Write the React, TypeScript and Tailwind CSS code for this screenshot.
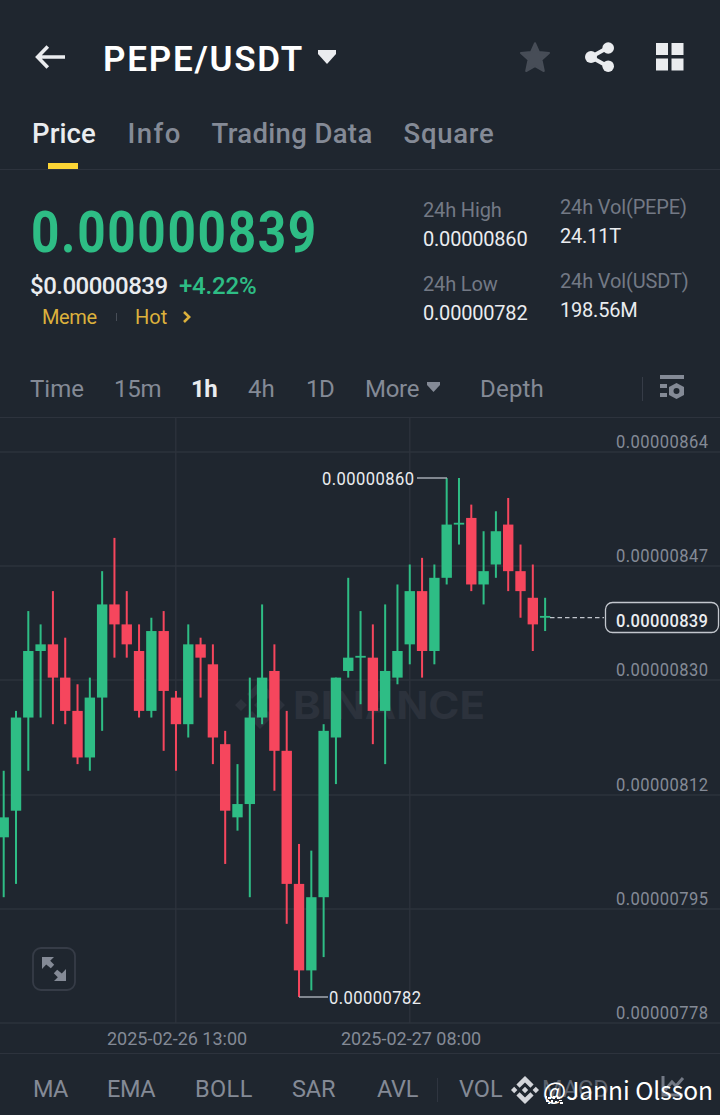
import clsx from "clsx";

type Candle = [number, number, number, number, "u" | "d"];

// high, body top, body bottom, low, in ticks below 0.00000860
const candles: Candle[] = [
  [44, 51, 54, 63, "u"], [35, 36, 50, 61, "u"], [20, 26, 36, 44, "u"], [22, 25, 26, 36, "u"],
  [17, 25, 30, 37, "d"], [24, 30, 35, 37, "d"], [31, 35, 42, 43, "d"], [30, 33, 42, 44, "u"],
  [14, 19, 33, 38, "u"], [9, 19, 22, 27, "d"], [17, 22, 25, 27, "d"], [22, 26, 35, 36, "d"],
  [21, 23, 35, 36, "u"], [20, 23, 32, 41, "d"], [32, 33, 37, 44, "d"], [22, 25, 37, 39, "u"],
  [24, 25, 27, 33, "d"], [25, 28, 39, 43, "d"], [38, 40, 50, 58, "d"], [43, 49, 51, 53, "u"],
  [30, 36, 49, 63, "u"], [19, 30, 36, 37, "u"], [25, 29, 41, 47, "d"], [35, 41, 61, 67, "d"],
  [55, 61, 74, 78, "d"], [56, 63, 74, 77, "u"], [37, 38, 63, 72, "u"], [30, 30, 39, 46, "u"],
  [15, 27, 29, 30, "u"], [20, 27, 27, 34, "u"], [22, 27, 35, 40, "d"], [19, 29, 35, 43, "u"],
  [16, 26, 30, 31, "u"], [13, 17, 25, 28, "u"], [12, 17, 26, 30, "d"], [13, 15, 26, 28, "u"],
  [0, 7, 15, 16, "u"], [0, 7, 7, 10, "u"], [4, 6, 16, 17, "d"], [8, 14, 16, 19, "u"],
  [5, 8, 13, 15, "u"], [3, 7, 14, 17, "d"], [10, 14, 17, 21, "d"], [13, 18, 22, 26, "d"],
  [18, 21, 21, 23, "u"],
];

const xAt = (i: number) => 3.7 + i * 12.305;
const yAt = (tick: number) => 60 + tick * 6.654;

const priceLevels = [
  { y: 34, label: "0.00000864" },
  { y: 148, label: "0.00000847" },
  { y: 262, label: "0.00000830" },
  { y: 377, label: "0.00000812" },
  { y: 491, label: "0.00000795" },
  { y: 605, label: "0.00000778" },
];

const tabs = [
  { label: "Price", className: "w-[95.5px] text-[#eaecef] tracking-[0.1px]", active: true },
  { label: "Info", className: "w-[84px] tracking-[1.5px]" },
  { label: "Trading Data", className: "w-[192px] tracking-[0.35px]" },
  { label: "Square", className: "tracking-[0.75px]" },
];

const intervals = [
  { label: "Time", className: "w-[84px]" },
  { label: "15m", className: "w-[77px] tracking-[-0.3px]" },
  { label: "1h", className: "w-[57px] font-bold tracking-[-0.5px] text-[#eaecef]" },
  { label: "4h", className: "w-[58px]" },
  { label: "1D", className: "w-[59px] tracking-[-0.4px]" },
];

const indicators = [
  { label: "MA", className: "w-[74px] tracking-[-0.8px]" },
  { label: "EMA", className: "w-[88px] tracking-[-0.4px]" },
  { label: "BOLL", className: "w-[97px] tracking-[0.4px]" },
  { label: "SAR", className: "w-[85px] tracking-[-0.2px]" },
  { label: "AVL", className: "w-[60px] tracking-[-0.3px]" },
];

const BinanceMark = ({ className }: { className?: string }) => (
  <svg viewBox="0 0 28 28" className={className} fill="currentColor">
    <path d="M14 0 22.6 8.6 19.4 11.8 14 6.4 8.6 11.8 5.4 8.6Z" />
    <path d="M14 28 22.6 19.4 19.4 16.2 14 21.6 8.6 16.2 5.4 19.4Z" />
    <path d="M3.2 10.8 6.4 14 3.2 17.2 0 14Z" />
    <path d="M24.8 10.8 28 14 24.8 17.2 21.6 14Z" />
    <path d="M14 10.8 17.2 14 14 17.2 10.8 14Z" />
  </svg>
);

const Header = () => (
  <header className="flex h-[115px] shrink-0 items-center pb-0.5 pl-[35px] pr-[36px]">
    <svg viewBox="0 0 30 24" className="h-6 w-[30px]" fill="none" stroke="#eaecef" strokeWidth="3.6">
      <path d="M2.5 12H30M12.8 1.5 2.6 12 12.8 22.5" />
    </svg>
    <h1 className="ml-[38px] w-[199px] whitespace-nowrap pt-[5px] text-[35px] font-semibold leading-none tracking-[1.75px] text-white">
      PEPE/USDT
    </h1>
    <svg viewBox="0 0 18 14" className="ml-4 h-[14px] w-[18px]" fill="#eaecef">
      <path d="M0 0H18V4L9 14 0 4Z" />
    </svg>
    <svg viewBox="0 0 30 30" className="ml-auto h-[30px] w-[30px]" fill="#474d57" stroke="#474d57" strokeWidth="2" strokeLinejoin="round">
      <path d="M15 1.2 18.9 10 29 11 21.5 17.8 23.8 29 15 24.2 6.2 29 8.5 17.8 1 11 11.1 10Z" />
    </svg>
    <svg viewBox="0 0 30 30" className="ml-[35px] h-[30px] w-[30px]" fill="#eaecef">
      <path d="M6 15 23 5.5M6 15 23 24.5" stroke="#eaecef" strokeWidth="4" />
      <circle cx="6" cy="15" r="6" />
      <circle cx="23.2" cy="6" r="5.8" />
      <circle cx="23.2" cy="24.2" r="5.8" />
    </svg>
    <svg viewBox="0 0 28 28" className="ml-[41px] h-7 w-7" fill="#eaecef">
      <path d="M0 0H12V12H0ZM15.5 0H27.5V12H15.5ZM0 15.5H12V27.5H0ZM15.5 15.5H27.5V27.5H15.5Z" />
    </svg>
  </header>
);

const Stat = ({ label, value }: { label: string; value: string }) => (
  <div className="h-[74px] whitespace-nowrap">
    <div className="text-[20px] leading-7 tracking-[-0.15px] text-[#737985]">{label}</div>
    <div className="text-[20px] leading-[30px] tracking-[-0.2px] text-[#eaecef]">{value}</div>
  </div>
);

const ChartPrice = ({ x, y, fill, weight = 400, children }: any) => (
  <text transform={`translate(${x} ${y}) scale(0.92 1)`} fill={fill} fontWeight={weight} textLength="100">
    {children}
  </text>
);

const Chart = () => (
  <svg viewBox="0 0 720 606" className="block h-[606px] w-[720px] shrink-0">
    <g stroke="#2d333d" strokeWidth="1.3">
      {priceLevels.map((l) => (
        <line key={l.label} x1="0" x2="720" y1={l.y} y2={l.y} />
      ))}
      <line x1="175.8" x2="175.8" y1="0" y2="605" />
      <line x1="409.8" x2="409.8" y1="0" y2="605" />
    </g>

    {/* Watermark */}
    <g fill="#2c323c">
      <path d="M260 263 273 276 268 281 260 273 252 281 247 276ZM260 311 273 298 268 293 260 301 252 293 247 298ZM241 281 247 287 241 293 235 287ZM279 281 285 287 279 293 273 287ZM260 281 266 287 260 293 254 287Z" />
      <text x="293" y="301" fontSize="38" fontWeight="700" fontFamily="Inter, sans-serif" textLength="192" lengthAdjust="spacingAndGlyphs">BINANCE</text>
    </g>

    {candles.map(([high, top, bottom, low, dir], i) => (
      <g key={i} fill={dir === "u" ? "#2ebd85" : "#f6465d"}>
        <rect x={xAt(i) - 1} y={yAt(high)} width="2" height={yAt(low) - yAt(high)} />
        <rect
          x={xAt(i) - 5.2}
          y={top === bottom ? yAt(top) - 1.8 : yAt(top)}
          width="10.4"
          height={Math.max(yAt(bottom) - yAt(top), 1.8)}
        />
      </g>
    ))}

    <g fontSize="18" fontFamily="Roboto, sans-serif">
      {priceLevels.map((l) => (
        <ChartPrice key={l.label} x={616} y={l.y - 4} fill="#848a96">{l.label}</ChartPrice>
      ))}
      <path d="M417 60H447M299 579H328" stroke="#a3a8b1" strokeWidth="1.5" />
      <ChartPrice x={322} y={67} fill="#eaecef">0.00000860</ChartPrice>
      <ChartPrice x={329} y={586} fill="#eaecef">0.00000782</ChartPrice>

      <path d="M550 199.7H604" stroke="#c2c6cd" strokeWidth="1.3" strokeDasharray="4.5 3" />
      <rect x="605.5" y="184.5" width="113" height="30" rx="7" fill="#1f262f" stroke="#c2c6cd" strokeWidth="1.3" />
      <ChartPrice x={616} y={209} fill="#eaecef" weight={500}>0.00000839</ChartPrice>
    </g>

    {/* Expand button */}
    <rect x="33" y="530" width="42" height="42" rx="8" fill="none" stroke="#363c47" strokeWidth="1.8" />
    <path d="M42 539H54L50.2 542.8 54.2 546.8 50.8 550.2 46.2 546.6 42 551ZM66 563H54L57.8 559.2 53.8 555.2 57.2 551.8 61.8 555.4 66 551Z" fill="#848a96" />
  </svg>
);

export default function App() {
  return (
    <div className="relative flex h-[1115px] w-[720px] flex-col overflow-hidden bg-[#1f262f] font-['Roboto',sans-serif] text-[#848a96]">
      <Header />

      <nav className="flex h-[55px] shrink-0 border-b border-[#2d333d] pl-8 text-[27.5px] font-medium leading-[37px]">
        {tabs.map((t) => (
          <div key={t.label} className={clsx("flex flex-col whitespace-nowrap", t.className)}>
            {t.label}
            {t.active && <span className="ml-4 mt-[11px] h-1.5 w-[30px] bg-[#fcd535]" />}
          </div>
        ))}
      </nav>

      <section className="flex h-[190px] shrink-0 pl-[31px]">
        <div className="w-[392px] whitespace-nowrap">
          <div className="origin-left scale-x-[0.87] pt-[33px] text-[57px] font-bold leading-[60px] tracking-[1.9px] text-[#2ebd85]">
            0.00000839
          </div>
          <div className="mt-2 flex text-[24px] font-medium leading-[30px]">
            <span className="-ml-px w-[149px] tracking-[-0.5px] text-[#eaecef]">$0.00000839</span>
            <span className="text-[#2ebd85] tracking-[-0.2px]">+4.22%</span>
          </div>
          <div className="flex items-center pl-[11px] text-[20px] leading-8 text-[#dcb13c]">
            <span className="w-[74px] tracking-[-0.4px]">Meme</span>
            <span className="h-2 w-px bg-[#474d57]" />
            <span className="ml-[18px] w-[48px]">Hot</span>
            <svg viewBox="0 0 8 12" className="h-3 w-2" fill="none" stroke="currentColor" strokeWidth="2.6">
              <path d="M1 1 6.2 6 1 11" />
            </svg>
          </div>
        </div>
        <div className="w-[137px] pt-[26px]">
          <Stat label="24h High" value="0.00000860" />
          <Stat label="24h Low" value="0.00000782" />
        </div>
        <div className="pt-[23px]">
          <Stat label="24h Vol(PEPE)" value="24.11T" />
          <Stat label="24h Vol(USDT)" value="198.56M" />
        </div>
      </section>

      <div className="flex h-[58px] shrink-0 items-center whitespace-nowrap border-b border-[#2d333d] pl-[30px] text-[24px]">
        {intervals.map((t) => (
          <span key={t.label} className={t.className}>{t.label}</span>
        ))}
        <span className="w-[62px] tracking-[-0.3px]">More</span>
        <svg viewBox="0 0 13 10" className="mb-[3px] h-2.5 w-[13px]" fill="currentColor">
          <path d="M0 0H13V3L6.5 10 0 3Z" />
        </svg>
        <span className="ml-10 w-[162px] tracking-[0.2px]">Depth</span>
        <span className="h-6 w-px bg-[#363c47]" />
        <svg viewBox="0 0 24 24" className="mb-1 ml-[17px] h-6 w-6" fill="currentColor">
          <path d="M0 0H24V4H0ZM0 9H7V13H0ZM0 18H7V22H0Z" />
          <path d="M16.5 8 24 12V20L16.5 24 9 20V12ZM16.5 13A3 3 0 1 0 16.5 19 3 3 0 1 0 16.5 13Z" fillRule="evenodd" />
        </svg>
      </div>

      <Chart />

      <div className="flex h-[30px] shrink-0 items-center whitespace-nowrap border-b border-[#2d333d] pl-[107px] text-[18px]">
        <span className="w-[234px]">2025-02-26 13:00</span>
        <span>2025-02-27 08:00</span>
      </div>

      <div className="flex h-[72px] shrink-0 items-center whitespace-nowrap pl-[33px] text-[23.5px]">
        {indicators.map((t) => (
          <span key={t.label} className={t.className}>{t.label}</span>
        ))}
        <span className="h-6 w-px bg-[#2f3540]" />
        <span className="ml-[21px] w-[83px]">VOL</span>
        <span className="w-[119px] text-[#5c626d]">MACD</span>
        <svg viewBox="0 0 24 24" className="mb-1.5 h-6 w-6" fill="none" stroke="#737985" strokeWidth="3">
          <path d="M2 1V20H22M4 15 11 7 15 11 22 3" />
        </svg>
      </div>

      {/* Author signature over the indicator bar */}
      <div className="absolute left-[511px] top-[1070px] flex items-center whitespace-nowrap text-[24.5px] leading-10 text-white font-['Noto_Sans_CJK_SC',sans-serif]">
        <BinanceMark className="mr-1 h-7 w-7 text-[#d3d5da]" />
        <span>@Janni Olsson</span>
        <svg viewBox="0 0 18 9" className="absolute left-[34px] top-[25px] h-[9px] w-[18px]" fill="currentColor">
          <path d="M0 1H2V3H0ZM3 2H6V4H3ZM8 1H10V4H8ZM12 2H15V4H12ZM1 5H4V7H1ZM6 5H8V8H6ZM10 6H12V8H10ZM14 5H17V6H14ZM15 7H18V9H15ZM3 8H5V9H3Z" />
        </svg>
      </div>
    </div>
  );
}
